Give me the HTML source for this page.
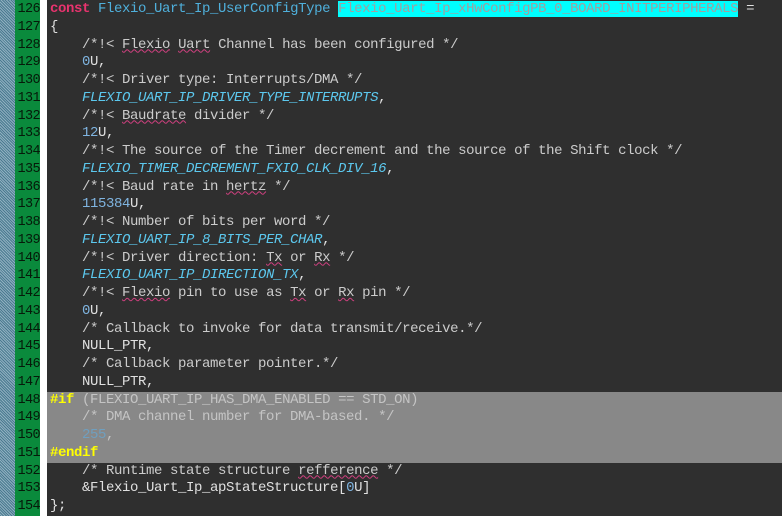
<!DOCTYPE html><html><head><style>
body{margin:0;width:782px;height:516px;overflow:hidden;background:#2f2f2f;font-family:"Liberation Mono",monospace;font-size:14px;letter-spacing:-0.4px;}
#strip{position:absolute;left:0;top:0;width:15px;height:516px;background:repeating-linear-gradient(45deg,#4a7a90 0 1px,#8fb0c0 1px 2px);}
#gut{position:absolute;left:15px;top:0;width:25px;height:516px;background:#0a8a3c;}
#gap{position:absolute;left:40px;top:0;width:7px;height:516px;background:#fff;}
.l{position:absolute;left:0;height:17.75px;line-height:17.75px;white-space:pre;width:782px;}
.n{position:absolute;left:15px;width:25px;text-align:right;color:#061a0a;font-size:13.5px;letter-spacing:-0.6px;}
.c{position:absolute;left:50px;color:#e0e0e0;}
.hl{position:absolute;left:47px;right:0;height:17.75px;background:#888;}
.k{color:#e8336e;font-weight:bold}.t{color:#4fb0dc}.cm{color:#cccccc}.m{color:#5cc8ee;font-style:italic}.num{color:#7fb4e0}
.y{color:#ffff00;font-weight:bold}.g{color:#c4c4c4}.gn{color:#6f9fbf}
.sq{text-decoration:underline wavy #d04080;text-decoration-thickness:1px}
.cy{background:#00ffff;color:#a0a0a0}
</style></head><body>
<div id="strip"></div><div id="gut"></div><div id="gap"></div>
<div class="hl" style="top:391.5px;height:71px"></div>
<div id="code"></div>
<script>
var L=[
'<span class="k">const</span> <span class="t">Flexio_Uart_Ip_UserConfigType</span> <span class="cy">Flexio_Uart_Ip_xHwConfigPB_0_BOARD_INITPERIPHERALS</span> =',
'{',
'    <span class="cm">/*!&lt; <span class="sq">Flexio</span> <span class="sq">Uart</span> Channel has been configured */</span>',
'    <span class="num">0</span>U,',
'    <span class="cm">/*!&lt; Driver type: Interrupts/DMA */</span>',
'    <span class="m">FLEXIO_UART_IP_DRIVER_TYPE_INTERRUPTS</span>,',
'    <span class="cm">/*!&lt; <span class="sq">Baudrate</span> divider */</span>',
'    <span class="num">12</span>U,',
'    <span class="cm">/*!&lt; The source of the Timer decrement and the source of the Shift clock */</span>',
'    <span class="m">FLEXIO_TIMER_DECREMENT_FXIO_CLK_DIV_16</span>,',
'    <span class="cm">/*!&lt; Baud rate in <span class="sq">hertz</span> */</span>',
'    <span class="num">115384</span>U,',
'    <span class="cm">/*!&lt; Number of bits per word */</span>',
'    <span class="m">FLEXIO_UART_IP_8_BITS_PER_CHAR</span>,',
'    <span class="cm">/*!&lt; Driver direction: <span class="sq">Tx</span> or <span class="sq">Rx</span> */</span>',
'    <span class="m">FLEXIO_UART_IP_DIRECTION_TX</span>,',
'    <span class="cm">/*!&lt; <span class="sq">Flexio</span> pin to use as <span class="sq">Tx</span> or <span class="sq">Rx</span> pin */</span>',
'    <span class="num">0</span>U,',
'    <span class="cm">/* Callback to invoke for data transmit/receive.*/</span>',
'    NULL_PTR,',
'    <span class="cm">/* Callback parameter pointer.*/</span>',
'    NULL_PTR,',
'<span class="y">#if</span> <span class="g">(FLEXIO_UART_IP_HAS_DMA_ENABLED == STD_ON)</span>',
'    <span class="g">/* DMA channel number for DMA-based. */</span>',
'    <span class="gn">255</span><span class="g">,</span>',
'<span class="y">#endif</span>',
'    <span class="cm">/* Runtime state structure <span class="sq">refference</span> */</span>',
'    &amp;Flexio_Uart_Ip_apStateStructure[<span class="num">0</span>U]',
'};'];
var h='';for(var i=0;i<L.length;i++){h+='<div class="l" style="top:'+(1+i*17.75)+'px"><span class="n">'+(126+i)+'</span><span class="c">'+L[i]+'</span></div>';}
document.getElementById('code').innerHTML=h;
</script>
</body></html>
